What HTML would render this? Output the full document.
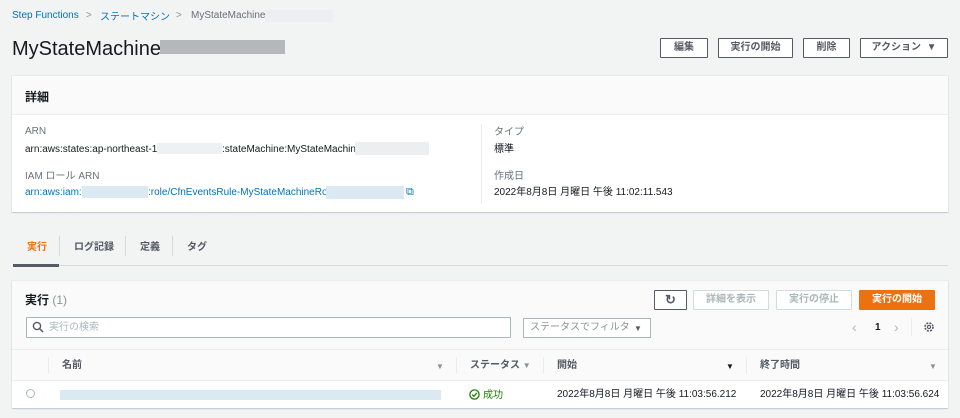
<!DOCTYPE html>
<html><head><meta charset="utf-8"><style>
*{box-sizing:border-box;margin:0;padding:0}
body{width:960px;height:418px;overflow:hidden;background:#f2f3f3;font-family:"Liberation Sans","Noto Sans CJK JP",sans-serif;color:#16191f;font-size:10px;position:relative;line-height:12px}
.a{position:absolute;white-space:nowrap;line-height:12px}
.j{padding-top:2px}
.link{color:#0073bb}
.btn{position:absolute;border:1px solid #545b64;background:#fff;font-size:10px;font-weight:bold;color:#545b64;text-align:center;line-height:18px;height:20px;border-radius:1px}
.dis{border-color:#d5dbdb;color:#aab7b8}
.card{position:absolute;background:#fff;box-shadow:0 1px 1px rgba(0,43,102,.2),0 0 0 1px #eaeded}
.blur{position:absolute;background:#e3e6e8}
.blurb{position:absolute;background:#d6e6f2}
.lbl{color:#687078;font-size:10px}
</style></head><body>
<div class="a link" style="left:12px;top:10px;font-size:10px">Step Functions</div>
<div class="a" style="left:86px;top:10px;color:#879596">&gt;</div>
<div class="a link j" style="left:100px;top:10px">ステートマシン</div>
<div class="a" style="left:176px;top:10px;color:#879596">&gt;</div>
<div class="a" style="left:191px;top:10px;color:#687078">MyStateMachine-</div>
<div class="blur" style="left:265px;top:10px;width:68px;height:12px;background:#eceeef"></div>
<div class="a" style="left:12px;top:38px;font-size:20px;line-height:22px;color:#16191f">MyStateMachine-</div>
<div class="blur" style="left:160px;top:40px;width:125px;height:14px;background:#b5b8bb"></div>

<div class="btn" style="left:660px;top:38px;width:48px">編集</div>
<div class="btn" style="left:718px;top:38px;width:75px">実行の開始</div>
<div class="btn" style="left:803px;top:38px;width:47px">削除</div>
<div class="btn" style="left:860px;top:38px;width:88px">アクション&nbsp;&nbsp;▼</div>

<div class="card" style="left:12px;top:76px;width:936px;height:136px">
 <div style="height:39px;background:#fafafa;border-bottom:1px solid #eaeded"></div>
</div>
<div class="a j" style="left:25px;top:88px;font-size:12px;line-height:14px;font-weight:bold">詳細</div>
<div style="position:absolute;left:481px;top:124px;width:1px;height:80px;background:#eaeded"></div>
<div class="a lbl" style="left:25px;top:126px">ARN</div>
<div class="a" style="left:25px;top:144px;font-size:10px">arn:aws:states:ap-northeast-1:</div>
<div class="blur" style="left:157px;top:143px;width:65px;height:11px;background:#eef0f1"></div>
<div class="a" style="left:222px;top:144px">:stateMachine:MyStateMachine</div>
<div class="blur" style="left:355px;top:142px;width:74px;height:13px;background:#eceeef"></div>
<div class="a lbl j" style="left:25px;top:169px">IAM ロール ARN</div>
<div class="a link" style="left:25px;top:187px">arn:aws:iam::</div>
<div class="blurb" style="left:82px;top:186px;width:66px;height:12px;background:#dbe9f3"></div>
<div class="a link" style="left:148px;top:187px">:role/CfnEventsRule-MyStateMachineRole</div>
<div class="blurb" style="left:326px;top:186px;width:78px;height:13px;background:#dbe9f3"></div>
<div class="a link" style="left:406px;top:186px;font-size:11px">⧉</div>
<div class="a lbl j" style="left:494px;top:125px">タイプ</div>
<div class="a j" style="left:494px;top:142px">標準</div>
<div class="a lbl j" style="left:494px;top:169px">作成日</div>
<div class="a" style="left:494px;top:187px">2022年8月8日 月曜日 午後 11:02:11.543</div>

<div style="position:absolute;left:13px;top:265px;width:935px;height:1px;background:#d5dbdb"></div>
<div style="position:absolute;left:13px;top:264px;width:46px;height:3px;background:#545b64"></div>
<div class="a j" style="left:27px;top:240px;color:#ec7211;font-weight:bold">実行</div>
<div style="position:absolute;left:59px;top:236px;width:1px;height:20px;background:#d5dbdb"></div>
<div class="a j" style="left:74px;top:240px;color:#545b64;font-weight:bold">ログ記録</div>
<div style="position:absolute;left:125px;top:236px;width:1px;height:20px;background:#d5dbdb"></div>
<div class="a j" style="left:140px;top:240px;color:#545b64;font-weight:bold">定義</div>
<div style="position:absolute;left:172px;top:236px;width:1px;height:20px;background:#d5dbdb"></div>
<div class="a j" style="left:187px;top:240px;color:#545b64;font-weight:bold">タグ</div>

<div class="card" style="left:12px;top:281px;width:936px;height:127px">
 <div style="height:69px;background:#fafafa;border-bottom:1px solid #eaeded"></div>
 <div style="height:31px;background:#fafafa;border-bottom:1px solid #eaeded"></div>
</div>
<div class="a" style="left:25px;top:293px;font-size:12px;line-height:14px;font-weight:bold">実行 <span style="color:#879596;font-weight:normal">(1)</span></div>
<div class="btn" style="left:654px;top:290px;width:33px;font-size:13px;line-height:17px">↻</div>
<div class="btn dis" style="left:693px;top:290px;width:76px">詳細を表示</div>
<div class="btn dis" style="left:776px;top:290px;width:76px">実行の停止</div>
<div class="btn" style="left:859px;top:290px;width:76px;background:#ec7211;border-color:#ec7211;color:#fff">実行の開始</div>
<div style="position:absolute;left:26px;top:317px;width:485px;height:21px;border:1px solid #aab7b8;background:#fff;border-radius:1px"></div>
<svg class="a" style="left:32px;top:321px" width="12" height="12" viewBox="0 0 12 12"><circle cx="5" cy="5" r="3.6" fill="none" stroke="#545b64" stroke-width="1.4"/><path d="M7.6 7.6L11 11" stroke="#545b64" stroke-width="1.5"/></svg>
<div class="a j" style="left:49px;top:320px;color:#aab7b8">実行の検索</div>
<div style="position:absolute;left:523px;top:318px;width:128px;height:20px;border:1px solid #aab7b8;background:#fff"></div>
<div class="a j" style="left:530px;top:320px;color:#879596">ステータスでフィルタ</div>
<div class="a" style="left:634px;top:323px;font-size:8px;color:#545b64">▼</div>
<div class="a" style="left:852px;top:320px;font-size:14px;line-height:14px;color:#aab7b8">‹</div>
<div class="a" style="left:875px;top:322px;font-weight:bold">1</div>
<div class="a" style="left:894px;top:320px;font-size:14px;line-height:14px;color:#aab7b8">›</div>
<div style="position:absolute;left:911px;top:318px;width:1px;height:18px;background:#eaeded"></div>
<svg class="a" style="left:923px;top:321px" width="12" height="12" viewBox="0 0 12 12"><circle cx="6" cy="6" r="4" fill="none" stroke="#545b64" stroke-width="1.6" stroke-dasharray="2 1.2"/><circle cx="6" cy="6" r="1.6" fill="none" stroke="#545b64" stroke-width="1.2"/></svg>

<div style="position:absolute;left:48px;top:357px;width:1px;height:17px;background:#eaeded"></div>
<div style="position:absolute;left:456px;top:357px;width:1px;height:17px;background:#eaeded"></div>
<div style="position:absolute;left:543px;top:357px;width:1px;height:17px;background:#eaeded"></div>
<div style="position:absolute;left:746px;top:357px;width:1px;height:17px;background:#eaeded"></div>
<div class="a j" style="left:62px;top:358px;font-weight:bold;color:#545b64">名前</div>
<div class="a" style="left:436px;top:361px;font-size:8px;color:#879596">▼</div>
<div class="a j" style="left:470px;top:358px;font-weight:bold;color:#545b64">ステータス <span style="font-size:8px;color:#879596">▼</span></div>
<div class="a j" style="left:557px;top:358px;font-weight:bold;color:#545b64">開始</div>
<div class="a" style="left:726px;top:361px;font-size:8px;color:#16191f">▼</div>
<div class="a j" style="left:760px;top:358px;font-weight:bold;color:#545b64">終了時間</div>
<div class="a" style="left:929px;top:361px;font-size:8px;color:#879596">▼</div>

<div style="position:absolute;left:26px;top:389px;width:9px;height:9px;border:1px solid #aab7b8;border-radius:50%"></div>
<div class="blurb" style="left:60px;top:390px;width:381px;height:10px;background:#dbe9f3"></div>
<svg class="a" style="left:469px;top:389px" width="11" height="11" viewBox="0 0 11 11"><circle cx="5.5" cy="5.5" r="4.6" fill="none" stroke="#1d8102" stroke-width="1.3"/><path d="M3.2 5.6L4.9 7.2L7.9 4" fill="none" stroke="#1d8102" stroke-width="1.3"/></svg>
<div class="a j" style="left:483px;top:388px;color:#1d8102">成功</div>
<div class="a" style="left:557px;top:389px">2022年8月8日 月曜日 午後 11:03:56.212</div>
<div class="a" style="left:760px;top:389px">2022年8月8日 月曜日 午後 11:03:56.624</div>
</body></html>
